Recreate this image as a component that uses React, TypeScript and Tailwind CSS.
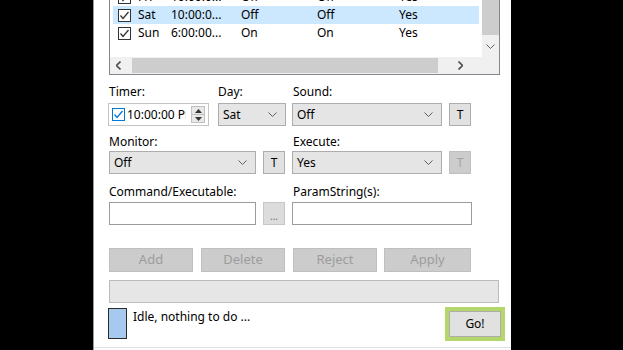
import React from "react";

const Chevron = ({ dir = "down", color = "#606060" }: { dir?: "down" | "left" | "right"; color?: string }) => {
  if (dir === "down")
    return (
      <svg width="9" height="5" viewBox="0 0 9 5">
        <polyline points="0.5,0.5 4.5,4.5 8.5,0.5" fill="none" stroke={color} strokeWidth="1" />
      </svg>
    );
  if (dir === "left")
    return (
      <svg width="5" height="9" viewBox="0 0 5 9">
        <polyline points="4.5,0.5 0.5,4.5 4.5,8.5" fill="none" stroke={color} strokeWidth="1.6" />
      </svg>
    );
  return (
    <svg width="5" height="9" viewBox="0 0 5 9">
      <polyline points="0.5,0.5 4.5,4.5 0.5,8.5" fill="none" stroke={color} strokeWidth="1.6" />
    </svg>
  );
};

const ListCheck = () => (
  <svg width="13" height="13" viewBox="0 0 13 13">
    <rect x="0.5" y="0.5" width="12" height="12" fill="white" stroke="#333" />
    <polyline points="2.5,6.5 5,9.5 10.5,3" fill="none" stroke="#333" strokeWidth="1.3" />
  </svg>
);

const BlueCheck = () => (
  <svg width="13" height="13" viewBox="0 0 13 13">
    <rect x="0.5" y="0.5" width="12" height="12" fill="white" stroke="#0078d7" />
    <polyline points="2.5,6.5 5,9.5 10.5,3" fill="none" stroke="#0078d7" strokeWidth="1.3" />
  </svg>
);

const Combo = ({ value, w }: { value: string; w: string }) => (
  <div className={`${w} h-[23px] bg-[#e5e5e5] border border-[#adadad] flex items-center justify-between pl-[4px] pr-[8px]`}>
    <span className="leading-none">{value}</span>
    <Chevron />
  </div>
);

const TBtn = ({ disabled = false }: { disabled?: boolean }) =>
  disabled ? (
    <div className="w-[22px] h-[23px] bg-[#cccccc] border border-[#bfbfbf] flex items-center justify-center text-[#a3a3a3]">T</div>
  ) : (
    <div className="w-[22px] h-[23px] bg-[#e1e1e1] border border-[#adadad] flex items-center justify-center">T</div>
  );

const DisBtn = ({ label, w }: { label: string; w: string }) => (
  <div className={`${w} h-[24px] bg-[#cccccc] border border-[#bfbfbf] flex items-center justify-center text-[#9c9c9c] text-[13px]`}>
    {label}
  </div>
);

type Row = { day: string; time: string; a: string; b: string; c: string; sel?: boolean };

const rows: Row[] = [
  { day: "Fri", time: "10:00:0...", a: "Off", b: "Off", c: "Yes" },
  { day: "Sat", time: "10:00:0...", a: "Off", b: "Off", c: "Yes", sel: true },
  { day: "Sun", time: "6:00:00...", a: "On", b: "On", c: "Yes" },
];

export default function App() {
  return (
    <div className="w-[623px] h-[350px] bg-black flex overflow-hidden text-[12px] text-black font-['Noto_Sans','Open_Sans',sans-serif]">
      <div className="w-[93px] shrink-0" />
      <div className="w-[418px] h-[350px] shrink-0 bg-white border-l border-[#9a9a9a] pl-[15px] flex flex-col">
        {/* List box */}
        <div className="mt-[-14px] w-[391px] h-[89px] border border-[#828790] flex flex-col bg-white">
          <div className="flex h-[70px]">
            <div className="flex-1 pt-[1px] pl-[3px] overflow-hidden">
              {rows.map((r, i) => (
                <div
                  key={i}
                  className={`h-[18px] w-[366px] flex items-center ${r.sel ? "bg-[#cce8ff]" : ""}`}
                >
                  <div className="w-[5px]" />
                  <ListCheck />
                  <span className="ml-[7px] w-[33px]">{r.day}</span>
                  <span className="w-[70px]">{r.time}</span>
                  <span className="w-[76px]">{r.a}</span>
                  <span className="w-[82px]">{r.b}</span>
                  <span>{r.c}</span>
                </div>
              ))}
            </div>
            <div className="w-[17px] bg-[#f0f0f0] flex flex-col">
              <div className="h-[48px] bg-[#cdcdcd]" />
              <div className="flex-1 flex items-center justify-center">
                <Chevron color="#606060" />
              </div>
            </div>
          </div>
          <div className="flex h-[17px]">
            <div className="flex-1 bg-[#f0f0f0] flex items-center">
              <div className="w-[17px] flex justify-center">
                <Chevron dir="left" color="#505050" />
              </div>
              <div className="ml-[5px] w-[306px] h-[15px] bg-[#cdcdcd]" />
              <div className="flex-1 flex justify-center">
                <Chevron dir="right" color="#505050" />
              </div>
            </div>
            <div className="w-[17px] bg-[#f0f0f0]" />
          </div>
        </div>

        {/* Row 1 labels */}
        <div className="mt-[9px] h-[15px] leading-[15px] flex">
          <span className="w-[109px]">Timer:</span>
          <span className="w-[75px]">Day:</span>
          <span>Sound:</span>
        </div>
        <div className="mt-[4px] flex items-center">
          <div className="-ml-[1px] w-[101px] h-[23px] border border-[#c4c4c4] bg-white flex items-center pl-[3px]">
            <BlueCheck />
            <span className="ml-[2px] w-[59px] overflow-hidden whitespace-nowrap leading-none">10:00:00 PM</span>
            <div className="ml-[5px] w-[14px] h-[17px] flex flex-col border border-[#c0c0c0]">
              <div className="flex-1 bg-[#e8e8e8] flex items-center justify-center border-b border-[#c0c0c0]">
                <svg width="7" height="4" viewBox="0 0 7 4"><polygon points="0,4 3.5,0 7,4" fill="#333" /></svg>
              </div>
              <div className="flex-1 bg-[#e8e8e8] flex items-center justify-center">
                <svg width="7" height="4" viewBox="0 0 7 4"><polygon points="0,0 3.5,4 7,0" fill="#333" /></svg>
              </div>
            </div>
          </div>
          <div className="ml-[9px]">
            <Combo value="Sat" w="w-[68px]" />
          </div>
          <div className="ml-[6px]">
            <Combo value="Off" w="w-[150px]" />
          </div>
          <div className="ml-[7px]">
            <TBtn />
          </div>
        </div>

        {/* Row 2 */}
        <div className="mt-[8px] h-[15px] leading-[15px] flex">
          <span className="w-[184px]">Monitor:</span>
          <span>Execute:</span>
        </div>
        <div className="mt-[2px] flex items-center">
          <Combo value="Off" w="w-[147px]" />
          <div className="ml-[7px]">
            <TBtn />
          </div>
          <div className="ml-[7px]">
            <Combo value="Yes" w="w-[150px]" />
          </div>
          <div className="ml-[7px]">
            <TBtn disabled />
          </div>
        </div>

        {/* Row 3 */}
        <div className="mt-[10px] h-[15px] leading-[15px] flex">
          <span className="w-[184px]">Command/Executable:</span>
          <span>ParamString(s):</span>
        </div>
        <div className="mt-[3px] flex items-center">
          <div className="w-[147px] h-[23px] border border-[#9b9b9b] bg-white" />
          <div className="ml-[7px] w-[22px] h-[23px] bg-[#dcdcdc] border border-[#c6c6c6] flex items-center justify-center text-[#707070] text-[10px] leading-none pt-[4px]">
            ...
          </div>
          <div className="ml-[7px] w-[180px] h-[23px] border border-[#9b9b9b] bg-white" />
        </div>

        {/* Buttons */}
        <div className="mt-[23px] flex">
          <DisBtn label="Add" w="w-[84px]" />
          <div className="ml-[8px]">
            <DisBtn label="Delete" w="w-[84px]" />
          </div>
          <div className="ml-[8px]">
            <DisBtn label="Reject" w="w-[84px]" />
          </div>
          <div className="ml-[7px]">
            <DisBtn label="Apply" w="w-[87px]" />
          </div>
        </div>

        {/* Progress */}
        <div className="mt-[8px] w-[390px] h-[23px] bg-[#e6e6e6] border border-[#bcbcbc]" />

        {/* Bottom */}
        <div className="mt-[4px] flex items-start">
          <div className="-ml-[1px] mt-[1px] w-[19px] h-[31px] bg-[#a6c9ef] border border-[#2b2b2b]" />
          <span className="ml-[6px] mt-[2px] leading-[15px]">Idle, nothing to do ...</span>
          <div className="ml-auto mr-[6px] w-[60px] h-[34px] border-[4px] border-[#b5d66a] flex">
            <div className="flex-1 bg-[#e1e1e1] border border-[#adadad] flex items-center justify-center">Go!</div>
          </div>
        </div>
        <div className="mt-[6px] -ml-[15px] w-[417px] border-t border-[#e0e0e0]" />
      </div>
    </div>
  );
}
